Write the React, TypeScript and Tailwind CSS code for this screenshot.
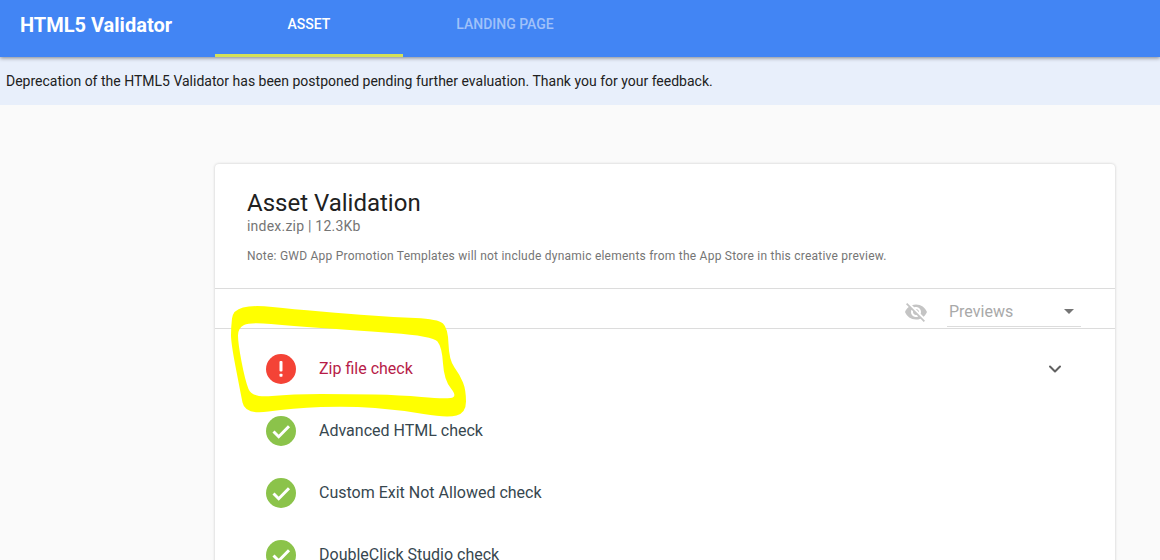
import { ChevronDown } from "lucide-react";

const checks = [
  { name: "Zip file check", failed: true },
  { name: "Advanced HTML check", failed: false },
  { name: "Custom Exit Not Allowed check", failed: false },
  { name: "DoubleClick Studio check", failed: false },
];

// hand-drawn highlighter loop, traced as outer and inner edge
const outerEdge = [
  [8, 10], [28, 5], [67, 9], [125, 14], [168, 17], [213, 19], [223, 28], [224, 60], [235, 75], [241, 90],
  [241, 113], [222, 118], [175, 110], [125, 106], [67, 108], [20, 115], [15, 90], [6, 43], [6, 27],
];
const innerEdge = [
  [13, 28], [25, 22], [67, 26], [125, 30], [208, 36], [217, 47], [219, 80], [233, 97], [218, 99], [175, 95],
  [125, 94], [67, 94], [27, 98], [20, 80], [13, 43],
];

function smoothLoop(points: number[][]) {
  const mid = (a: number[], b: number[]) => `${(a[0] + b[0]) / 2} ${(a[1] + b[1]) / 2}`;
  let d = `M${mid(points[points.length - 1], points[0])}`;
  points.forEach((p, i) => {
    d += `Q${p[0]} ${p[1]} ${mid(p, points[(i + 1) % points.length])}`;
  });
  return d + "Z";
}

function StatusIcon({ failed }: { failed: boolean }) {
  if (failed) {
    return (
      <svg width="30" height="30" viewBox="0 0 30 30" className="-mt-[1px] shrink-0">
        <circle cx="15" cy="15" r="15" fill="#f44336" />
        <rect x="13.5" y="7" width="3" height="10.5" rx="1" fill="#fff" />
        <rect x="13.5" y="19.8" width="3" height="3" rx="0.8" fill="#fff" />
      </svg>
    );
  }
  return (
    <svg width="30" height="30" viewBox="0 0 30 30" className="-mt-[1px] shrink-0">
      <circle cx="15" cy="15" r="15" fill="#8bc34a" />
      <path d="M7.5 15.5l5.2 5.2L23 10.2" fill="none" stroke="#fff" strokeWidth="3" />
    </svg>
  );
}

export default function App() {
  return (
    <div className="relative h-[560px] w-[1160px] overflow-hidden bg-[#fafafa] font-['Roboto',sans-serif]">
      <header className="relative z-10 flex h-[57px] bg-[#4285f4] shadow-[0_1px_4px_rgba(0,0,0,0.45)]">
        <div className="w-[215px] pl-5 pt-[12px] text-[20px] font-bold leading-[26px] text-white">HTML5 Validator</div>
        <div className="flex h-[57px] w-[188px] justify-center border-b-[3px] border-[#d4e157] pt-[15px] text-[14px] font-medium leading-[18px] text-white">
          ASSET
        </div>
        <div className="flex h-[57px] w-[204px] justify-center pt-[15px] text-[14px] font-medium leading-[18px] text-white/50">
          LANDING PAGE
        </div>
      </header>

      <div className="flex h-[48px] items-center bg-[#e8effb] pl-[6px] pt-[1px] text-[14px] text-[#212121]">
        Deprecation of the HTML5 Validator has been postponed pending further evaluation. Thank you for your feedback.
      </div>

      <main className="ml-[215px] mt-[59px] w-[900px] rounded-sm bg-white shadow-[0_0_3px_rgba(0,0,0,0.2)]">
        <div className="h-[125px] border-b border-[#dcdcdc] pl-8 pt-[23px]">
          <h1 className="text-[24px] leading-[32px] text-[#212121]">Asset Validation</h1>
          <p className="-mt-[2px] text-[14px] leading-[18px] tracking-[0.22px] text-[#757575]">index.zip | 12.3Kb</p>
          <p className="mt-[13px] text-[12px] leading-[16px] tracking-[0.23px] text-[#757575]">
            Note: GWD App Promotion Templates will not include dynamic elements from the App Store in this creative preview.
          </p>
        </div>

        <div className="flex h-[40px] items-center justify-end border-b border-[#dcdcdc] pr-[34px]">
          <svg width="24" height="24" viewBox="0 0 24 24" fill="#c4c4c4" className="mr-[19px] mt-[7px]">
            <path d="M12 7c2.76 0 5 2.24 5 5 0 .65-.13 1.26-.36 1.83l2.92 2.92c1.51-1.26 2.7-2.89 3.43-4.75-1.73-4.39-6-7.5-11-7.5-1.4 0-2.74.25-3.98.7l2.16 2.16C10.74 7.13 11.35 7 12 7zM2 4.27l2.28 2.28.46.46C3.08 8.3 1.78 10.02 1 12c1.73 4.39 6 7.5 11 7.5 1.55 0 3.03-.3 4.38-.84l.42.42L19.73 22 21 20.73 3.27 3 2 4.27zM7.53 9.8l1.55 1.55c-.05.21-.08.43-.08.65 0 1.66 1.34 3 3 3 .22 0 .44-.03.65-.08l1.55 1.55c-.67.33-1.41.53-2.2.53-2.76 0-5-2.24-5-5 0-.79.2-1.53.53-2.2zm4.31-.78l3.15 3.15.02-.16c0-1.66-1.34-3-3-3l-.17.01z" />
          </svg>
          <div className="flex h-[36px] w-[134px] items-center justify-between border-b border-[#dcdcdc] pl-[2px] pr-[7px] pt-[7px] text-[16px] text-[#a9a9a9]">
            Previews
            <span className="h-0 w-0 border-x-[5px] border-t-[5px] border-x-transparent border-t-[#757575]" />
          </div>
        </div>

        <div className="pt-[9px]">
          {checks.map((check) => (
            <div key={check.name} className="flex h-[62px] items-center pl-[51px] pr-[50px]">
              <StatusIcon failed={check.failed} />
              <span className={`ml-[23px] flex-1 text-[16px] ${check.failed ? "text-[#b71c48]" : "text-[#37474f]"}`}>
                {check.name}
              </span>
              {check.failed && <ChevronDown size={20} strokeWidth={2.4} className="-mt-[1px] text-[#616161]" />}
            </div>
          ))}
        </div>
      </main>

      <svg width="245" height="120" viewBox="0 0 245 120" className="absolute left-[225px] top-[300px]">
        <path d={smoothLoop(outerEdge) + smoothLoop(innerEdge)} fill="#ffff00" fillRule="evenodd" />
      </svg>
    </div>
  );
}
